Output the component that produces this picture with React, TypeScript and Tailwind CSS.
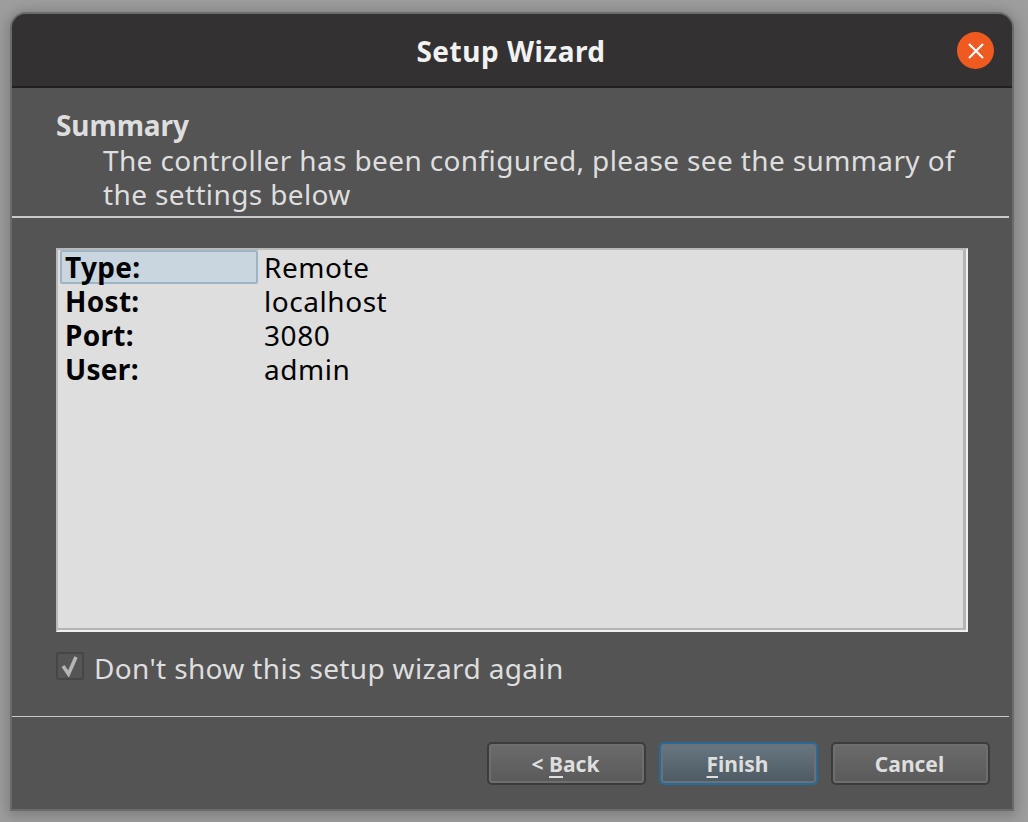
import React from "react";

const font = { fontFamily: '"Noto Sans", "Open Sans", sans-serif' };

function Btn({ children, focus }: { children: React.ReactNode; focus?: boolean }) {
  return (
    <div
      className={
        "flex h-[43px] w-[159px] items-center justify-center rounded-[5px] border-2 pr-[2px] text-[21px] font-bold leading-none text-[#dedede] " +
        (focus
          ? "border-[#2a6a98] bg-gradient-to-b from-[#68777f] to-[#4d5a64] shadow-[inset_0_0_0_2px_#687278]"
          : "border-[#3c3c3c] bg-gradient-to-b from-[#6b6b6b] to-[#5a5a5a] shadow-[inset_0_0_0_2px_#6e6e6e]")
      }
    >
      <span className="mt-[2px]">{children}</span>
    </div>
  );
}

const rows = [
  ["Type:", "Remote"],
  ["Host:", "localhost"],
  ["Port:", "3080"],
  ["User:", "admin"],
];

export default function App() {
  return (
    <div style={font} className="h-[822px] w-[1028px] overflow-hidden bg-[#9e9e9e] pl-[12px] pt-[14px]">
      <div className="flex h-[795px] w-[1000px] flex-col overflow-hidden rounded-t-[14px] bg-[#545454] shadow-[0_0_0_2px_#6b6b6b,0_2px_14px_5px_#7d7d7d]">
        <div className="relative flex h-[74px] shrink-0 items-center justify-center border-b-2 border-[#1f1f1f] bg-[#333132]">
          <span className="mt-[2px] mr-[2px] text-[28px] font-bold tracking-[0.5px] text-[#f2f2f2]">Setup Wizard</span>
          <div className="absolute left-[945px] top-[18px] flex h-[37px] w-[37px] items-center justify-center rounded-full bg-[#ef5a21]">
            <svg width="18" height="18" viewBox="0 0 18 18" fill="none" stroke="#ffffff" strokeWidth="2.2">
              <path d="M2 2L16 16M16 2L2 16" />
            </svg>
          </div>
        </div>

        <div className="flex h-[128px] shrink-0 flex-col pl-[44px]">
          <div className="mt-[20px] text-[28px] font-bold leading-[34px] tracking-[-0.1px] text-[#dedede]">Summary</div>
          <div className="mt-[1px] ml-[47px] w-[870px] text-[28px] leading-[34px] tracking-[0.37px] text-[#dedede]">
            The controller has been configured, please see the summary of the settings below
          </div>
        </div>
        <div className="mr-[3px] h-[2px] shrink-0 bg-[#c9c9c9]"></div>

        <div className="flex h-[498px] shrink-0 flex-col px-[44px] pt-[30px]">
          <div className="flex h-[384px] w-[912px] flex-col border-2 border-[#b9b9b9] border-r-[#f0f0f0] border-b-[#f0f0f0] bg-[#dedede] pl-[2px] pt-0 shadow-[inset_-3px_-2px_0_#b5b5b5]">
            {rows.map(([k, v], i) => (
              <div key={k} className="flex h-[34px] text-[28px] leading-[34px] text-black">
                <div
                  className={
                    "w-[198px] rounded-[2px] font-bold tracking-[0.3px] " +
                    (i === 0 ? "border-2 border-[#9db4c6] bg-[#c9d6df] pl-[3px] leading-[30px]" : "pl-[5px]")
                  }
                >
                  {k}
                </div>
                <div className="pl-[6px] tracking-[0.55px]">{v}</div>
              </div>
            ))}
          </div>
          <div className="mt-[20px] flex items-start">
            <div className="flex h-[28px] w-[28px] items-center justify-center rounded-[2px] border-2 border-[#464646] bg-[#555555]">
              <svg width="20" height="22" viewBox="0 0 20 22" fill="none" stroke="#b5b5b5" strokeWidth="3.6">
                <path d="M3 11L8.5 19L16 2" />
              </svg>
            </div>
            <span className="-mt-[1px] ml-[10px] text-[28px] leading-[34px] tracking-[0.35px] text-[#dedede]">Don't show this setup wizard again</span>
          </div>
        </div>
        <div className="mr-[3px] h-[1px] shrink-0 bg-[#c9c9c9]"></div>

        <div className="flex flex-1 justify-end gap-[13px] pr-[22px] pt-[25px]">
          <Btn>
            &lt; <span className="underline decoration-2 underline-offset-4">B</span>ack
          </Btn>
          <Btn focus>
            <span className="underline decoration-2 underline-offset-4">F</span>inish
          </Btn>
          <Btn>Cancel</Btn>
        </div>
      </div>
    </div>
  );
}
